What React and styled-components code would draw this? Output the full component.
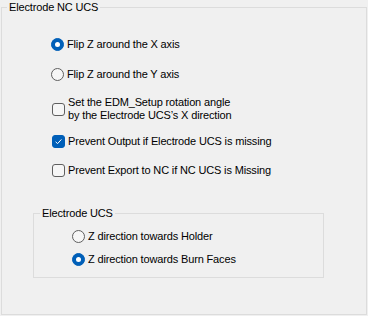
import React from "react";
import styled, { createGlobalStyle } from "styled-components";

const Global = createGlobalStyle`
  html, body { margin: 0; padding: 0; background: #f0f0f0; }
  body { font-family: "Liberation Sans", Arial, sans-serif; font-size: 11px; letter-spacing: -0.15px; color: #000; }
`;

const Page = styled.div`
  width: 368px;
  height: 316px;
  box-sizing: border-box;
  padding: 0 1px 1px 1px;
  background: #f0f0f0;
`;

const Group = styled.fieldset`
  box-sizing: border-box;
  margin: ${(p) => p.$margin || "0"};
  padding: ${(p) => p.$padding || "0"};
  border: 1px solid #dcdcdc;
  width: ${(p) => p.$width};
  height: ${(p) => p.$height};
  min-width: 0;
  display: flex;
  flex-direction: column;
`;

const Legend = styled.legend`
  margin-left: ${(p) => p.$indent}px;
  padding: 0 2px;
  line-height: 14px;
  font-size: 11px;
`;

const Row = styled.label`
  display: flex;
  align-items: center;
  gap: 3px;
  margin-top: ${(p) => p.$top}px;
  margin-left: ${(p) => p.$left}px;
  line-height: ${(p) => (p.$multi ? "13px" : "14px")};
  white-space: nowrap;
`;

const Lines = styled.span`
  display: flex;
  flex-direction: column;
`;

const RadioMark = styled.span`
  box-sizing: border-box;
  width: 13px;
  height: 13px;
  flex: none;
  border-radius: 50%;
  border: 1px solid ${(p) => (p.$on ? "#005fb8" : "#5f5f5f")};
  background: ${(p) => (p.$on ? "#005fb8" : "#f6f6f6")};
  display: flex;
  align-items: center;
  justify-content: center;
  &::after {
    content: "";
    display: ${(p) => (p.$on ? "block" : "none")};
    width: 5px;
    height: 5px;
    border-radius: 50%;
    background: #fff;
  }
`;

const BoxMark = styled.span`
  box-sizing: border-box;
  width: 13px;
  height: 13px;
  flex: none;
  border-radius: 3px;
  border: 1px solid ${(p) => (p.$on ? "#005fb8" : "#5f5f5f")};
  background: ${(p) => (p.$on ? "#005fb8" : "#f6f6f6")};
  display: flex;
  align-items: center;
  justify-content: center;
`;

const Radio = ({ on, top, left, children }) => (
  <Row $top={top} $left={left}>
    <RadioMark $on={on} />
    <span>{children}</span>
  </Row>
);

const Check = ({ on, top, left, multi, children }) => (
  <Row $top={top} $left={left} $multi={multi}>
    <BoxMark $on={on}>
      {on && (
        <svg width="9" height="9" viewBox="0 0 9 9">
          <path d="M1.6 4.8 L3.6 6.6 L7.4 2.4" fill="none" stroke="#fff" strokeWidth="1" />
        </svg>
      )}
    </BoxMark>
    {multi ? <Lines>{children}</Lines> : <span>{children}</span>}
  </Row>
);

export default function App() {
  return (
    <Page>
      <Global />
      <Group $width="366px" $height="315px">
        <Legend $indent={5}>Electrode NC UCS</Legend>
        <Radio on top={23} left={49}>Flip Z around the X axis</Radio>
        <Radio top={16} left={49}>Flip Z around the Y axis</Radio>
        <Check top={15} left={50} multi>
          <span>Set the EDM_Setup rotation angle</span>
          <span>by the Electrode UCS’s X direction</span>
        </Check>
        <Check on top={12} left={50}>Prevent Output if Electrode UCS is missing</Check>
        <Check top={15} left={50}>Prevent Export to NC if NC UCS is Missing</Check>
        <Group $width="291px" $height="72px" $margin="29px 0 0 31px">
          <Legend $indent={6}>Electrode UCS</Legend>
          <Radio top={9} left={38}>Z direction towards Holder</Radio>
          <Radio on top={9} left={38}>Z direction towards Burn Faces</Radio>
        </Group>
      </Group>
    </Page>
  );
}
